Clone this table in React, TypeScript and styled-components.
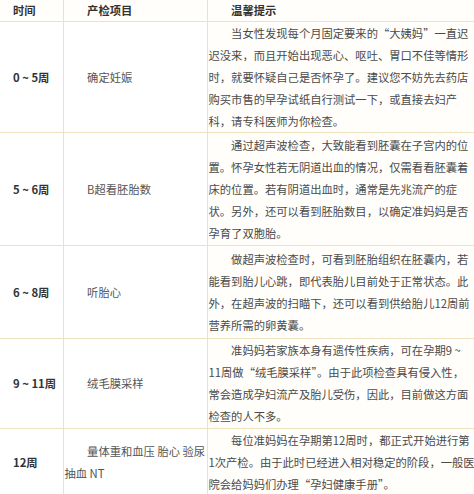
import React from 'react';
import styled, { createGlobalStyle } from 'styled-components';

const Global = createGlobalStyle`
  html, body { margin: 0; padding: 0; background: #ffffff; }
  body { font-family: "Noto Sans CJK SC", "Noto Sans", sans-serif; }
`;

const Table = styled.table`
  width: 474px;
  table-layout: fixed;
  border-collapse: collapse;
  font-size: 11.3px;
  color: #4a4a4a;
`;

const HeadRow = styled.tr`
  height: 21px;
`;

const Row = styled.tr<{ $h: number }>`
  height: ${(p) => p.$h}px;
`;

const HeadCell = styled.th<{ $indent?: boolean }>`
  border-right: 1px solid #efe3bf;
  border-bottom: 1px solid #efe3bf;
  padding: 0 1px 0 ${(p) => (p.$indent ? '1px' : '13px')};
  text-indent: ${(p) => (p.$indent ? '2em' : '0')};
  text-align: left;
  font-weight: 700;
  color: #333333;
  line-height: 20px;
  white-space: nowrap;
  background: #fffefb;
`;

const TimeCell = styled.td`
  border-right: 1px solid #efe3bf;
  border-bottom: 1px solid #efe3bf;
  padding: 0 0 0 13px;
  font-weight: 700;
  color: #333333;
  white-space: nowrap;
  vertical-align: middle;
`;

const ItemCell = styled.td`
  border-right: 1px solid #efe3bf;
  border-bottom: 1px solid #efe3bf;
  padding: 0 1px;
  text-indent: 2em;
  line-height: 22px;
  color: #555555;
  white-space: nowrap;
  vertical-align: middle;
`;

const TipCell = styled.td`
  border-right: 1px solid #efe3bf;
  border-bottom: 1px solid #efe3bf;
  padding: 0 1px;
  text-indent: 2em;
  line-height: 22px;
  white-space: nowrap;
  overflow: hidden;
  vertical-align: middle;
  background: #fffefa;
`;

type Item = { time: string; item: string[]; tip: string[]; h: number };

const rows: Item[] = [
  {
    time: '0 ~ 5周',
    item: ['确定妊娠'],
    h: 111,
    tip: [
      '当女性发现每个月固定要来的“大姨妈”一直迟',
      '迟没来，而且开始出现恶心、呕吐、胃口不佳等情形',
      '时，就要怀疑自己是否怀孕了。建议您不妨先去药店',
      '购买市售的早孕试纸自行测试一下，或直接去妇产',
      '科，请专科医师为你检查。',
    ],
  },
  {
    time: '5 ~ 6周',
    item: ['B超看胚胎数'],
    h: 113,
    tip: [
      '通过超声波检查，大致能看到胚囊在子宫内的位',
      '置。怀孕女性若无阴道出血的情况，仅需看看胚囊着',
      '床的位置。若有阴道出血时，通常是先兆流产的症',
      '状。另外，还可以看到胚胎数目，以确定准妈妈是否',
      '孕育了双胞胎。',
    ],
  },
  {
    time: '6 ~ 8周',
    item: ['听胎心'],
    h: 93,
    tip: [
      '做超声波检查时，可看到胚胎组织在胚囊内，若',
      '能看到胎儿心跳，即代表胎儿目前处于正常状态。此',
      '外，在超声波的扫瞄下，还可以看到供给胎儿12周前',
      '营养所需的卵黄囊。',
    ],
  },
  {
    time: '9 ~ 11周',
    item: ['绒毛膜采样'],
    h: 90,
    tip: [
      '准妈妈若家族本身有遗传性疾病，可在孕期9 ~',
      '11周做“绒毛膜采样”。由于此项检查具有侵入性，',
      '常会造成孕妇流产及胎儿受伤，因此，目前做这方面',
      '检查的人不多。',
    ],
  },
  {
    time: '12周',
    item: ['量体重和血压 胎心 验尿', '抽血 NT'],
    h: 67,
    tip: [
      '每位准妈妈在孕期第12周时，都正式开始进行第',
      '1次产检。由于此时已经进入相对稳定的阶段，一般医',
      '院会给妈妈们办理“孕妇健康手册”。',
    ],
  },
];

const lines = (arr: string[]) =>
  arr.map((l, i) => (
    <React.Fragment key={i}>
      {i > 0 && <br />}
      {l}
    </React.Fragment>
  ));

export default function App() {
  return (
    <>
      <Global />
      <Table>
        <colgroup>
          <col style={{ width: 63 }} />
          <col style={{ width: 144 }} />
          <col style={{ width: 267 }} />
        </colgroup>
        <thead>
          <HeadRow>
            <HeadCell>时间</HeadCell>
            <HeadCell $indent>产检项目</HeadCell>
            <HeadCell $indent>温馨提示</HeadCell>
          </HeadRow>
        </thead>
        <tbody>
          {rows.map((r) => (
            <Row key={r.time} $h={r.h}>
              <TimeCell>{r.time}</TimeCell>
              <ItemCell>{lines(r.item)}</ItemCell>
              <TipCell>{lines(r.tip)}</TipCell>
            </Row>
          ))}
        </tbody>
      </Table>
    </>
  );
}
